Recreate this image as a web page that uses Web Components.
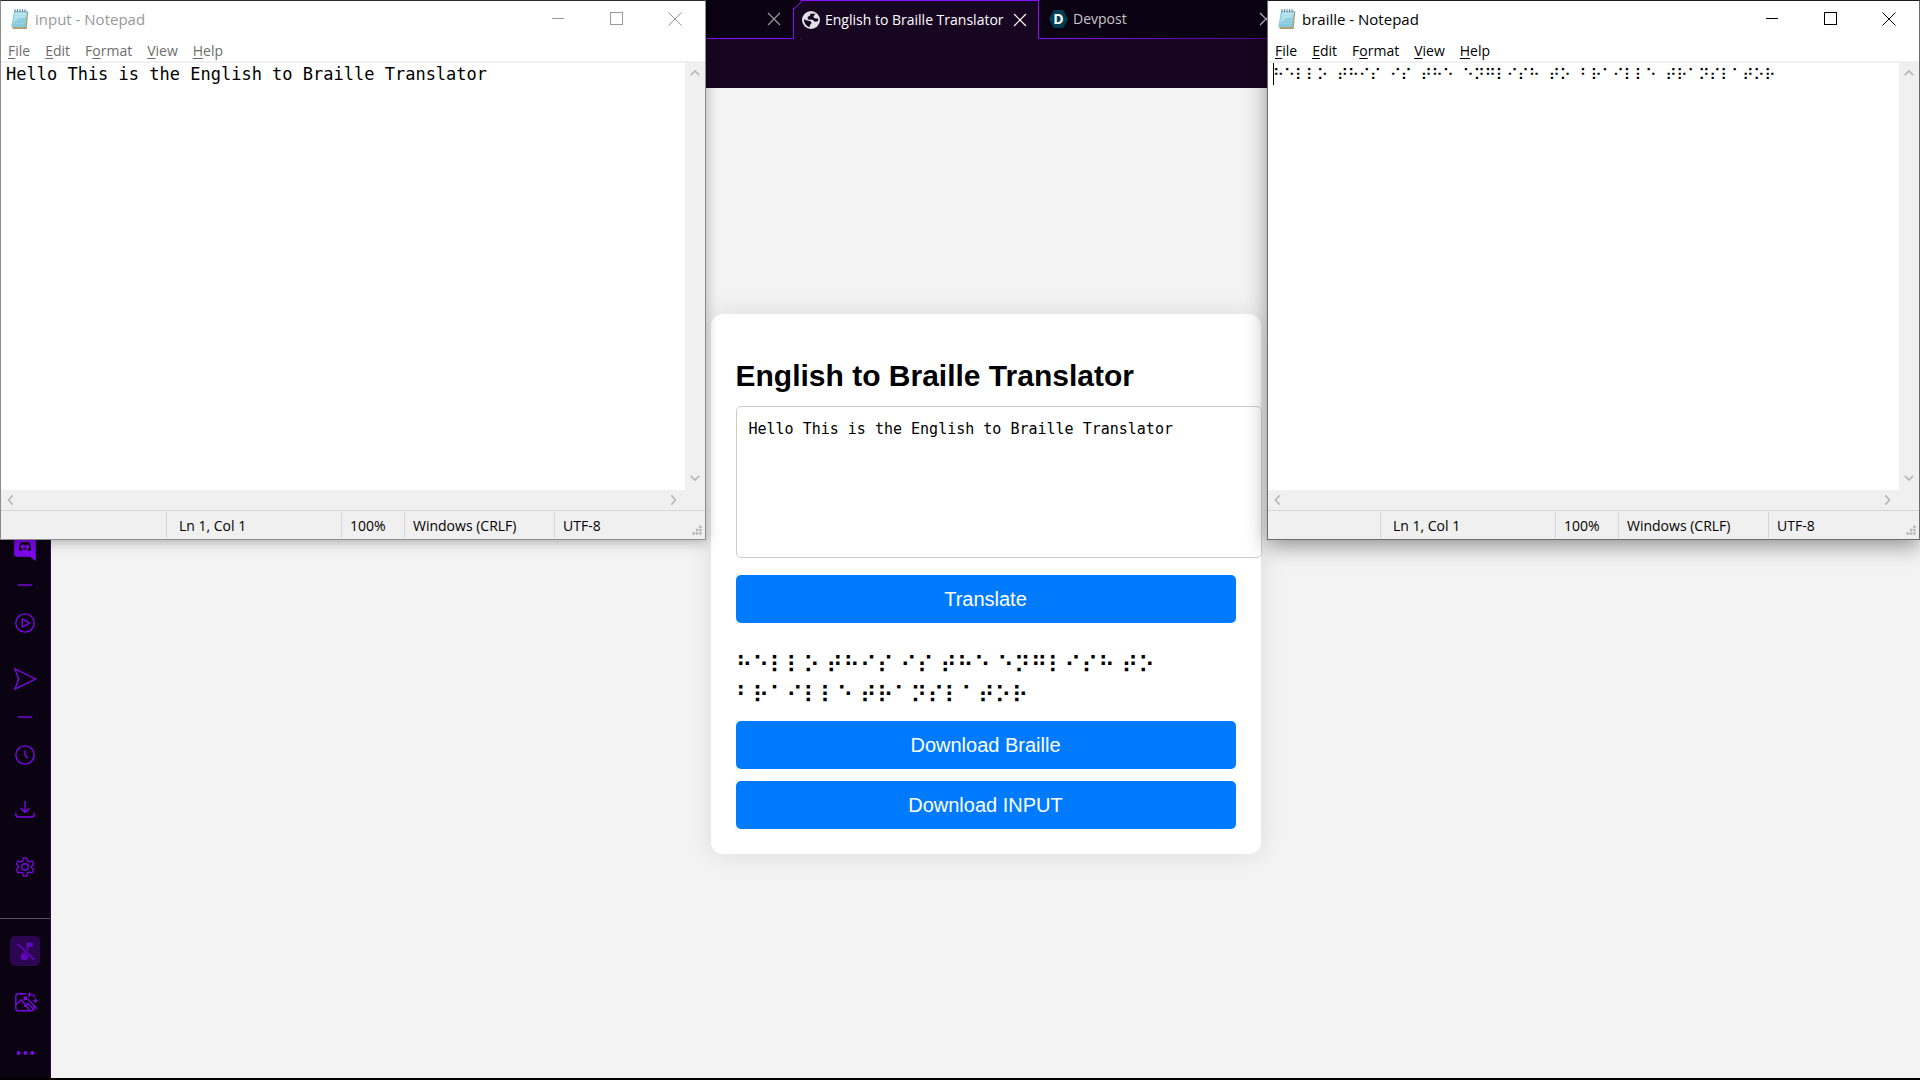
<!DOCTYPE html>
<html lang="en">
<head>
<meta charset="utf-8">
<title>English to Braille Translator</title>
<style>
  html, body { height: 100%; margin: 0; }
  body { overflow: hidden; background: #000; font-family: "Open Sans", "Noto Sans", sans-serif; font-size: 14px; }
</style>
</head>
<body>
<desk-top>
  <browser-window slot="browser">
    <browser-tab slot="tabs" class="first"></browser-tab>
    <browser-tab slot="tabs" icon="globe" active>English to Braille Translator</browser-tab>
    <browser-tab slot="tabs" icon="devpost">Devpost</browser-tab>
    <braille-card></braille-card>
  </browser-window>
  <notepad-window slot="left" name="input" text="Hello This is the English to Braille Translator"></notepad-window>
  <notepad-window slot="right" name="braille" active text="⠓⠑⠇⠇⠕ ⠞⠓⠊⠎ ⠊⠎ ⠞⠓⠑ ⠑⠝⠛⠇⠊⠎⠓ ⠞⠕ ⠃⠗⠁⠊⠇⠇⠑ ⠞⠗⠁⠝⠎⠇⠁⠞⠕⠗"></notepad-window>
</desk-top>

<script>
const icons = {
  discord: `<path d="M3 0H21Q23 0 23 2V26L18 22H3Q1 22 1 20V2Q1 0 3 0Z" fill="currentColor"/><path d="M7 6.500Q9 5 10 6H14Q15 5 17 6.500Q20 11 19.500 15Q17 18 15.500 16.500L15 15.500H9L8.500 16.500Q7 18 4.500 15Q4 11 7 6.500Z" fill="#0b0212"/><circle cx="9.500" cy="11.700" r="1.600" fill="currentColor"/><circle cx="14.500" cy="11.700" r="1.600" fill="currentColor"/>`,
  line: `<path d="M4 12H20"/>`,
  play: `<circle cx="12" cy="12" r="10"/><path d="M9 8.200V15.800Q9 16.500 10 16L16.500 12.500Q17 12 16.500 11.500L10 8Q9 7.500 9 8.200Z"/>`,
  send: `<path d="M1 1L23.500 12L1 23L5 12Z"/>`,
  clock: `<circle cx="12" cy="12" r="10"/><path d="M12 7V12L15 15.500"/>`,
  download: `<path d="M12 1V13M7 9L12 13.500L17 9M2 14V15.500Q2 18.500 5 18.500H19Q22 18.500 22 15.500V14"/>`,
  gear: `<circle cx="12" cy="12" r="3.600"/><path d="M10 2H14L15 5.500L17 6.500L20.500 5.500L22.500 9L20 11.300V12.700L22.500 15L20.500 18.500L17 17.500L15 18.500L14 22H10L9 18.500L7 17.500L3.500 18.500L1.500 15L4 12.700V11.300L1.500 9L3.500 5.500L7 6.500L9 5.500Z" stroke-linejoin="round" transform="translate(1.200 0) scale(.9 1)"/>`,
  music: `<g stroke="none" fill="currentColor"><circle cx="11.500" cy="18" r="4.200"/><path d="M13.500 3H20.500V7.500H15.700V18H13.500Z"/></g><path d="M4 4L22 21" stroke="#2c0650" stroke-width="4"/><path d="M3.500 4L22 21.500" stroke-width="1.800"/>`,
  image: `<path d="M13 3H4.500Q2 3 2 5.500V19Q2 21.500 4.500 21.500H19Q22 21.500 22 18V15M2 15L8 9.500L17 21M11 17L15 13.500L21 19.500M15 9L25.500 19.500M17 1.500V6.500M14.500 4H19.500M23.500 8V13M21 10.500H26M22 7V5.500Q22 4 20 4"/><circle cx="12.500" cy="8" r="1.500" fill="currentColor"/>`,
  dots: `<g fill="currentColor" stroke="none"><circle cx="5" cy="12" r="2.200"/><circle cx="12.500" cy="12" r="2.200"/><circle cx="20" cy="12" r="2.200"/></g>`,
  globe: `<circle cx="12" cy="12" r="12" fill="#e3e1e8" stroke="none"/><path d="M11 3.500H18L16 6Q14 7.500 17 9.500Q20 10.500 21.500 9.500V13Q18 15.500 15.500 13Q14 11 10.500 11.500Q7 11.500 7.500 8.500Q8.500 6.500 11 6Z" fill="#170621" stroke="none"/><path d="M2.500 11L8 13Q13 13.500 12.500 16.500Q10 18 10 21.500Q3 19.500 2.500 11Z" fill="#170621" stroke="none"/>`,
  notepad: `<path d="M5 3H22L20 24H3Z" fill="#b49a6c" stroke="none"/><path d="M5 2H21L18.500 22H1.500Z" fill="#86c9dc" stroke="none"/><path d="M6 4H20L19 10Q10 10 4 16Z" fill="#b9e5ef" stroke="none"/><path d="M5 8H19M4.500 11H19M4 14H18M3.500 17H18" stroke="#a5dbe6" stroke-width="1"/><path d="M6 0V4M9 0V4M12 0V4M15 0V4M18 0V4" stroke="#718b91" stroke-width="1.200"/>`,
  close: `<path d="M5.500 5.500L18.500 18.500M18.500 5.500L5.500 18.500"/>`,
  max: `<rect x="5.500" y="5.500" width="12" height="12" shape-rendering="crispEdges"/>`,
  min: `<path d="M5 11.500H17" shape-rendering="crispEdges"/>`,
  up: `<path d="M7 14.500L12 9.500L17 14.500"/>`,
  down: `<path d="M7 9.500L12 14.500L17 9.500"/>`,
  left: `<path d="M14 6.500L9 12L14 17.500"/>`,
  right: `<path d="M10 6.500L15 12L10 17.500"/>`,
  grip: `<g fill="#b8b8b8" stroke="none"><path d="M17 9h3v3h-3zM13 13h3v3h-3zM17 13h3v3h-3zM9 17h3v3h-3zM13 17h3v3h-3zM17 17h3v3h-3z"/></g>`
};

class UiIcon extends HTMLElement {
  constructor() {
    super();
    this.attachShadow({ mode: "open" });
  }
  connectedCallback() {
    this.shadowRoot.innerHTML = `
      <style>
        :host { display: block; flex: none; width: 24px; height: 24px; }
        svg { display: block; width: 100%; height: 100%; overflow: visible; fill: none; stroke: currentColor; stroke-width: var(--stroke, 1.3); }
      </style>
      <svg viewBox="0 0 24 24" aria-hidden="true">${icons[this.getAttribute("name")]}</svg>
    `;
  }
}
customElements.define("ui-icon", UiIcon);

class SideBar extends HTMLElement {
  constructor() {
    super();
    this.attachShadow({ mode: "open" });
    this.shadowRoot.innerHTML = `
      <style>
        :host { display: flex; flex: none; width: 50px; background: #0b0212; color: #7d08e8; border-right: 1px solid #30084f; }
        nav { display: flex; flex-direction: column; justify-content: flex-end; flex: 1; min-height: 0; }
        button { display: flex; flex: none; align-items: center; justify-content: center; height: 56px; margin: 0; padding: 0; border: 0; background: none; color: inherit; }
        .rule { display: flex; flex: none; justify-content: center; align-items: center; height: 20px; }
        hr { flex: none; width: 100%; height: 1px; margin: 23px 0 7px; border: 0; background: #55505a; }
        .short { height: 50px; }
        .mid { height: 52px; }
        .box { display: flex; align-items: center; justify-content: center; width: 30px; height: 30px; border-radius: 5px; background: #2c0650; color: #6505bb; }
        ui-icon { width: 22px; height: 22px; --stroke: 1.5; }
      </style>
      <nav aria-label="Sidebar">
        <button aria-label="Discord"><ui-icon name="discord"></ui-icon></button>
        <div class="rule"><ui-icon name="line"></ui-icon></div>
        <button aria-label="Player"><ui-icon name="play"></ui-icon></button>
        <button aria-label="Flow"><ui-icon name="send"></ui-icon></button>
        <div class="rule"><ui-icon name="line"></ui-icon></div>
        <button aria-label="History"><ui-icon name="clock"></ui-icon></button>
        <button aria-label="Downloads"><ui-icon name="download"></ui-icon></button>
        <button aria-label="Settings"><ui-icon name="gear"></ui-icon></button>
        <hr>
        <button class="short" aria-label="Mute music"><span class="box"><ui-icon name="music"></ui-icon></span></button>
        <button class="mid" aria-label="Wallpaper"><ui-icon name="image"></ui-icon></button>
        <button class="short" aria-label="More"><ui-icon name="dots"></ui-icon></button>
      </nav>
    `;
  }
}
customElements.define("side-bar", SideBar);

class BrowserTab extends HTMLElement {
  constructor() {
    super();
    this.attachShadow({ mode: "open" });
  }
  connectedCallback() {
    const icon = this.getAttribute("icon");
    let mark = "";
    if (icon === "globe") mark = `<ui-icon name="globe"></ui-icon>`;
    if (icon === "devpost") mark = `<span class="hex">D</span>`;
    this.shadowRoot.innerHTML = `
      <style>
        :host { display: flex; flex: none; align-items: center; box-sizing: border-box; width: 246px; height: 39px; padding: 0 8px 0 10px; color: #c9c6cd; border-bottom: 1px solid #8a0cff; }
        :host(.first) { flex: 1; color: #98959d; }
        :host([active]) { color: #fff; padding: 0 7px 0 8px; border: 1px solid #8a0cff; border-bottom-color: transparent;
          background: linear-gradient(135deg, #0b0212 5px, #8a0cff 5px, #8a0cff 6px, #170621 6px);
          clip-path: polygon(0 8px, 8px 0, 100% 0, 100% 100%, 0 100%); }
        :host([icon="devpost"]) { border-image: linear-gradient(90deg, #8a0cff, #4a0a86) 1; }
        .label { flex: 1; padding: 0 5px; white-space: nowrap; line-height: 20px; }
        button { display: flex; margin: 0; padding: 0; border: 0; background: none; color: inherit; }
        ui-icon { width: 18px; height: 18px; }
        button ui-icon { width: 22px; height: 22px; }
        .hex { display: flex; align-items: center; justify-content: center; width: 19px; height: 18px; background: #003e54; color: #fff;
          font-size: 14px; font-weight: 700; line-height: 18px; clip-path: polygon(25% 0, 75% 0, 100% 50%, 75% 100%, 25% 100%, 0 50%); }
      </style>
      ${mark}
      <span class="label"><slot></slot></span>
      <button aria-label="Close tab"><ui-icon name="close"></ui-icon></button>
    `;
  }
}
customElements.define("browser-tab", BrowserTab);

class BrowserWindow extends HTMLElement {
  constructor() {
    super();
    this.attachShadow({ mode: "open" });
    this.shadowRoot.innerHTML = `
      <style>
        :host { display: flex; height: 100%; }
        .main { display: flex; flex: 1; flex-direction: column; min-width: 0; }
        .tabs { display: flex; background: #0b0212; padding-right: 635px; }
        .toolbar { height: 49px; background: #170621; }
        main { display: flex; flex: 1; align-items: center; justify-content: center; padding-top: 2px; background: #f3f3f3; }
      </style>
      <side-bar></side-bar>
      <div class="main">
        <div class="tabs"><slot name="tabs"></slot></div>
        <div class="toolbar"></div>
        <main><slot></slot></main>
      </div>
    `;
  }
}
customElements.define("browser-window", BrowserWindow);

class BrailleCard extends HTMLElement {
  constructor() {
    super();
    this.attachShadow({ mode: "open" });
    this.shadowRoot.innerHTML = `
      <style>
        :host { display: block; box-sizing: border-box; width: 550px; padding: 25px; border-radius: 12px; background: #fff;
          box-shadow: 0 0 25px rgba(0, 0, 0, 0.1); color: #000; font-family: "Liberation Sans", Arial, sans-serif; font-size: 20px; }
        h2 { margin: 20px 0 13px; font-size: 30px; line-height: 34px; }
        textarea { display: block; box-sizing: content-box; width: 100%; height: 126px; margin: 0 0 17px; padding: 12px; border: 1px solid #ccc; border-radius: 5px;
          background: #fff; color: #000; resize: none; font: 15px/20px "DejaVu Sans Mono", monospace; white-space: pre; overflow: hidden; }
        button { display: block; width: 100%; height: 48px; margin: 0 0 12px; padding: 0; border: 0; border-radius: 5px; background: #007bff; color: #fff; font: inherit; }
        button:last-child { margin-bottom: 0; }
        p { margin: 27px 0 11px; font: 23px/30px "Liberation Sans", "DejaVu Sans", sans-serif; }
      </style>
      <h2>English to Braille Translator</h2>
      <textarea aria-label="English text" spellcheck="false">Hello This is the English to Braille Translator</textarea>
      <button>Translate</button>
      <p>⠓⠑⠇⠇⠕ ⠞⠓⠊⠎ ⠊⠎ ⠞⠓⠑ ⠑⠝⠛⠇⠊⠎⠓ ⠞⠕ ⠃⠗⠁⠊⠇⠇⠑ ⠞⠗⠁⠝⠎⠇⠁⠞⠕⠗</p>
      <button>Download Braille</button>
      <button>Download INPUT</button>
    `;
  }
}
customElements.define("braille-card", BrailleCard);

class NotepadWindow extends HTMLElement {
  constructor() {
    super();
    this.attachShadow({ mode: "open" });
  }
  connectedCallback() {
    const name = this.getAttribute("name");
    this.shadowRoot.innerHTML = `
      <style>
        :host { display: flex; flex-direction: column; box-sizing: border-box; height: 100%; border: 1px solid #8c8c8c; border-top-color: #2b2b33; background: #fff;
          box-shadow: 0 2px 12px rgba(0, 0, 0, 0.3); color: #6d6d6d; --title: #999; }
        :host([active]) { border-color: #6b6b6b; border-top-color: #1b1b22; box-shadow: 0 6px 20px rgba(0, 0, 0, 0.4); color: #000; --title: #000; }
        header { display: flex; align-items: center; height: 36px; padding: 0 1px 1px 9px; color: var(--title); }
        header ui-icon { width: 20px; height: 20px; }
        h1 { flex: 1; margin: 0 0 0 5px; font-size: 15px; font-weight: 400; line-height: 20px; }
        button { display: flex; align-items: center; justify-content: center; margin: 0; padding: 0; border: 0; background: none; color: inherit; font: inherit; }
        header button { width: 58px; height: 36px; --stroke: 1; }
        header button ui-icon { width: 24px; height: 24px; }
        nav { display: flex; gap: 1px; height: 23px; border-bottom: 2px solid #f0f0f0; }
        nav button { padding: 2px 7px 0; }
        u { text-underline-offset: 2px; }
        .body { position: relative; display: flex; flex: 1; min-height: 0; }
        textarea { flex: 1; min-width: 0; margin: 0; padding: 1px 5px; border: 0; outline: 0; resize: none; overflow: hidden; white-space: pre; background: #fff; color: #000;
          font: 17px/21px "DejaVu Sans Mono", monospace; }
        :host([active]) textarea { padding-top: 3px; font: 15px/21px "Liberation Mono", "DejaVu Sans", monospace; }
        .caret { position: absolute; left: 5px; top: 0; width: 1px; height: 22px; background: #000; display: none; }
        :host([active]) .caret { display: block; }
        .bar { display: flex; justify-content: space-between; background: #f0f0f0; color: #b8b8b8; --stroke: 2; }
        .bar ui-icon { width: 20px; height: 20px; }
        .v { flex-direction: column; width: 20px; padding-bottom: 2px; }
        .h { height: 20px; padding-right: 22px; }
        footer { display: flex; height: 28px; border-top: 1px solid #d7d7d7; background: #f0f0f0; color: #000; }
        footer span { box-sizing: border-box; flex: none; margin: 1px 0; padding-left: 8px; border-left: 1px solid #d7d7d7; line-height: 28px; white-space: nowrap; }
        .fill { flex: 1; }
        .pos { width: 175px; padding-left: 12px; }
        .zoom { width: 63px; }
        .eol { width: 150px; }
        .enc { display: flex; width: 151px; justify-content: space-between; align-items: flex-start; }
        .enc ui-icon { align-self: flex-end; width: 20px; height: 20px; }
      </style>
      <header>
        <ui-icon name="notepad"></ui-icon>
        <h1>${name} - Notepad</h1>
        <button aria-label="Minimize"><ui-icon name="min"></ui-icon></button>
        <button aria-label="Maximize"><ui-icon name="max"></ui-icon></button>
        <button aria-label="Close"><ui-icon name="close"></ui-icon></button>
      </header>
      <nav>
        <button><span><u>F</u>ile</span></button>
        <button><span><u>E</u>dit</span></button>
        <button><span>F<u>o</u>rmat</span></button>
        <button><span><u>V</u>iew</span></button>
        <button><span><u>H</u>elp</span></button>
      </nav>
      <div class="body">
        <textarea aria-label="${name}" spellcheck="false">${this.getAttribute("text")}</textarea>
        <i class="caret"></i>
        <div class="bar v"><ui-icon name="up"></ui-icon><ui-icon name="down"></ui-icon></div>
      </div>
      <div class="bar h"><ui-icon name="left"></ui-icon><ui-icon name="right"></ui-icon></div>
      <footer>
        <div class="fill"></div>
        <span class="pos">Ln 1, Col 1</span>
        <span class="zoom">100%</span>
        <span class="eol">Windows (CRLF)</span>
        <span class="enc">UTF-8<ui-icon name="grip"></ui-icon></span>
      </footer>
    `;
  }
}
customElements.define("notepad-window", NotepadWindow);

class DeskTop extends HTMLElement {
  constructor() {
    super();
    this.attachShadow({ mode: "open" });
    this.shadowRoot.innerHTML = `
      <style>
        :host { display: block; position: relative; box-sizing: border-box; height: 100vh; padding-bottom: 2px; overflow: hidden; }
        /* the two notepads float over the browser */
        .win { position: absolute; top: 0; height: 50%; }
        .left { left: 0; width: 706px; }
        .right { right: 0; width: 653px; }
      </style>
      <slot name="browser"></slot>
      <div class="win left"><slot name="left"></slot></div>
      <div class="win right"><slot name="right"></slot></div>
    `;
  }
}
customElements.define("desk-top", DeskTop);
</script>
</body>
</html>
